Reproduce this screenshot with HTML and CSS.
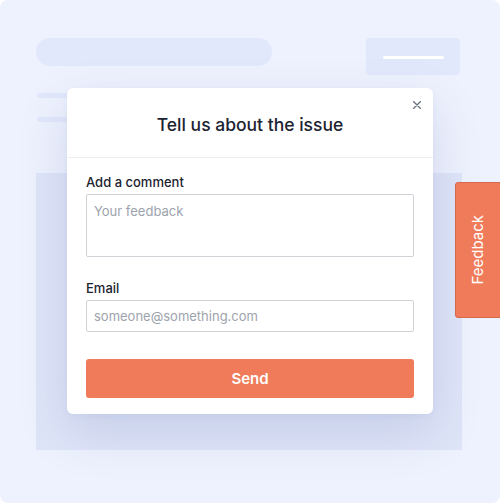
FILE: index.html
```html
<!DOCTYPE html>
<html lang="en">
<head>
<meta charset="utf-8">
<title>Feedback</title>
<link rel="stylesheet" href="styles.css">
</head>
<body>
<div class="card">
  <div class="wire-top">
    <div class="pill"></div>
    <div class="wire-btn"><span class="wire-btn-line"></span></div>
  </div>
  <div class="wire-lines">
    <div class="wire-line w1"></div>
    <div class="wire-line w2"></div>
  </div>
  <div class="wire-block"></div>

  <div class="modal">
    <div class="modal-header">
      <h2 class="modal-title">Tell us about the issue</h2>
      <button class="close" aria-label="Close">
        <svg width="8" height="8" viewBox="0 0 8 8"><path d="M0.5 0.5 L7.5 7.5 M7.5 0.5 L0.5 7.5" stroke="#6b7280" stroke-width="1.4" stroke-linecap="round" fill="none"/></svg>
      </button>
    </div>
    <div class="modal-body">
      <label class="field-label">Add a comment</label>
      <textarea class="field textarea" placeholder="Your feedback"></textarea>
      <label class="field-label email-label">Email</label>
      <input class="field input" type="text" placeholder="someone@something.com">
      <button class="send">Send</button>
    </div>
  </div>

  <div class="tab"><span class="tab-text">Feedback</span></div>
</div>
</body>
</html>
```

FILE: styles.css
```css
* { box-sizing: border-box; }
html, body { margin: 0; padding: 0; background: #ffffff; }
body { font-family: Inter, "Noto Sans", sans-serif; }

.card {
  position: relative;
  width: 500px;
  height: 503px;
  background: #eef2fe;
  border-radius: 8px;
  overflow: hidden;
  padding: 38px 40px 0 36px;
}

.wire-top {
  display: flex;
  justify-content: space-between;
  align-items: flex-start;
}
.pill {
  width: 236px;
  height: 28px;
  border-radius: 14px;
  background: #e2e8fb;
}
.wire-btn {
  width: 94px;
  height: 37px;
  border-radius: 4px;
  background: #e2e8fc;
  display: flex;
  justify-content: center;
  padding-top: 18px;
}
.wire-btn-line {
  display: block;
  width: 61px;
  height: 3px;
  border-radius: 2px;
  background: #ffffff;
}

.wire-lines {
  margin-top: 18px;
  display: flex;
  flex-direction: column;
  gap: 19px;
  padding-left: 1px;
}
.wire-line {
  height: 5px;
  border-radius: 3px;
  background: #e2e8fb;
}
.w1 { width: 140px; }
.w2 { width: 110px; }

.wire-block {
  margin-top: 51px;
  width: 426px;
  height: 277px;
  background: #dfe5f8;
}

.modal {
  position: absolute;
  left: 67px;
  top: 88px;
  width: 366px;
  background: #ffffff;
  border-radius: 6px;
  box-shadow: 0 18px 50px rgba(45, 65, 140, 0.15), 0 2px 6px rgba(45, 65, 140, 0.04);
}
.modal-header {
  position: relative;
  padding: 23px 0 18px;
  border-bottom: 1px solid #eceef1;
  text-align: center;
}
.modal-title {
  margin: 0;
  font-size: 17.5px;
  line-height: 28px;
  font-weight: 500;
  color: #1c2331;
}
.close {
  position: absolute;
  top: 13px;
  right: 12px;
  width: 8px;
  height: 8px;
  padding: 0;
  border: 0;
  background: none;
  display: block;
}
.close svg { display: block; }

.modal-body {
  display: flex;
  flex-direction: column;
  padding: 14px 19px 16px;
}
.field-label {
  font-size: 13px;
  line-height: 20px;
  font-weight: 500;
  color: #1c2331;
  margin-bottom: 2px;
}
.email-label { margin-top: 21px; }
.field {
  width: 328px;
  border: 1px solid #cfd2d7;
  border-radius: 2px;
  font-family: Inter, "Noto Sans", sans-serif;
  font-size: 13px;
  color: #1c2331;
  background: #ffffff;
  outline: none;
}
.field::placeholder { color: #9da3ad; opacity: 1; }
.textarea {
  height: 63px;
  padding: 7px 7px 5px;
  line-height: 18px;
  resize: none;
}
.input {
  height: 32px;
  padding: 0 7px;
}
.send {
  margin-top: 27px;
  height: 39px;
  width: 328px;
  border: 0;
  border-radius: 3px;
  background: #f07b5a;
  color: #ffffff;
  font-family: Inter, "Noto Sans", sans-serif;
  font-size: 15px;
  font-weight: 600;
}

.tab {
  position: absolute;
  left: 455px;
  top: 182px;
  width: 48px;
  height: 136px;
  background: #f07b5a;
  border: 1px solid #d4694c;
  border-radius: 3px 0 0 3px;
  display: flex;
  align-items: center;
  justify-content: flex-start;
  padding-left: 12px;
}
.tab-text {
  writing-mode: vertical-rl;
  transform: rotate(180deg);
  color: #ffffff;
  font-size: 15px;
  font-weight: 400;
  line-height: 20px;
}
```
